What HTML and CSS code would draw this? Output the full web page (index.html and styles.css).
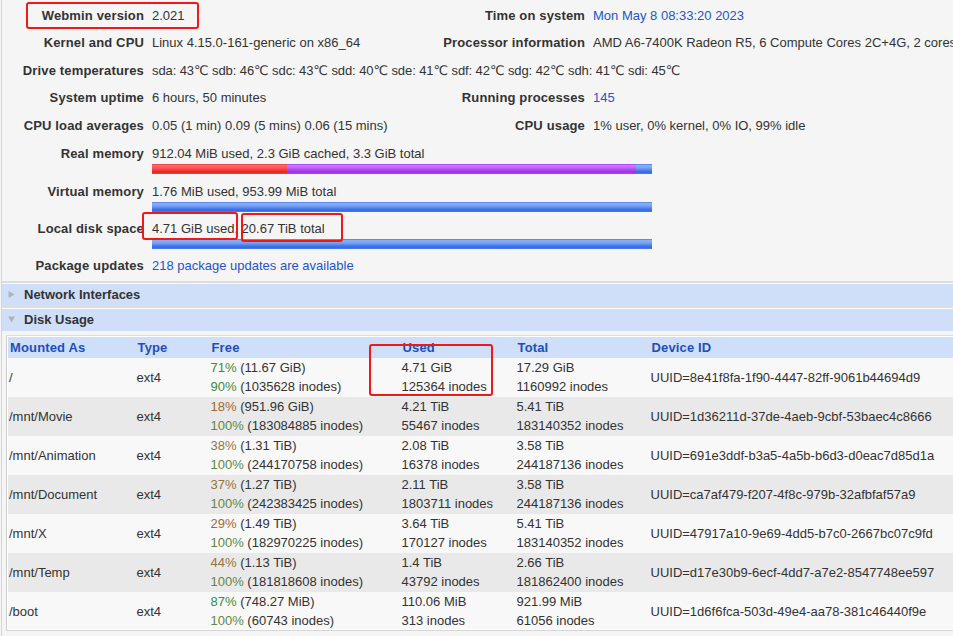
FILE: index.html
```html
<!DOCTYPE html>
<html>
<head>
<meta charset="utf-8">
<title>System Information</title>
<link rel="stylesheet" href="styles.css">
</head>
<body>
<div class="screen">
  <div class="page">
    <div class="sysinfo">
      <div class="info-row">
        <div class="label">Webmin version</div><div class="value">2.021</div>
        <div class="label">Time on system</div><div class="value link">Mon May 8 08:33:20 2023</div>
      </div>
      <div class="info-row">
        <div class="label">Kernel and CPU</div><div class="value">Linux 4.15.0-161-generic on x86_64</div>
        <div class="label">Processor information</div><div class="value">AMD A6-7400K Radeon R5, 6 Compute Cores 2C+4G, 2 cores</div>
      </div>
      <div class="info-row">
        <div class="label">Drive temperatures</div><div class="value wide temps">sda: 43℃ sdb: 46℃ sdc: 43℃ sdd: 40℃ sde: 41℃ sdf: 42℃ sdg: 42℃ sdh: 41℃ sdi: 45℃</div>
      </div>
      <div class="info-row">
        <div class="label">System uptime</div><div class="value">6 hours, 50 minutes</div>
        <div class="label">Running processes</div><div class="value link">145</div>
      </div>
      <div class="info-row">
        <div class="label">CPU load averages</div><div class="value">0.05 (1 min) 0.09 (5 mins) 0.06 (15 mins)</div>
        <div class="label">CPU usage</div><div class="value">1% user, 0% kernel, 0% IO, 99% idle</div>
      </div>
      <div class="info-row meter">
        <div class="label">Real memory</div>
        <div class="value wide">
          <div>912.04 MiB used, 2.3 GiB cached, 3.3 GiB total</div>
          <div class="bar bar-first"><span class="seg red" style="width:27%"></span><span class="seg purple" style="width:69.8%"></span><span class="seg blue" style="width:3.2%"></span></div>
        </div>
      </div>
      <div class="info-row meter">
        <div class="label">Virtual memory</div>
        <div class="value wide">
          <div>1.76 MiB used, 953.99 MiB total</div>
          <div class="bar"><span class="seg blue" style="width:100%"></span></div>
        </div>
      </div>
      <div class="info-row meter">
        <div class="label">Local disk space</div>
        <div class="value wide">
          <div>4.71 GiB used, 20.67 TiB total</div>
          <div class="bar"><span class="seg blue" style="width:100%"></span></div>
        </div>
      </div>
      <div class="info-row">
        <div class="label">Package updates</div><div class="value wide link">218 package updates are available</div>
      </div>
    </div>

    <div class="panel panel-first">
      <div class="panel-head">
        <svg class="arrow" width="7" height="7" viewBox="0 0 7 7"><polygon points="0.5,0 6.5,3.5 0.5,7" fill="#b3b3b3"/></svg>
        <span>Network Interfaces</span>
      </div>
    </div>

    <div class="panel">
      <div class="panel-head">
        <svg class="arrow" width="7" height="7" viewBox="0 0 7 7"><polygon points="0,0.5 7,0.5 3.5,6.5" fill="#b3b3b3"/></svg>
        <span>Disk Usage</span>
      </div>
      <div class="table-wrap">
        <table class="disks">
          <colgroup>
            <col class="c-mount"><col class="c-type"><col class="c-free"><col class="c-used"><col class="c-total"><col class="c-dev">
          </colgroup>
          <thead>
            <tr><th>Mounted As</th><th>Type</th><th>Free</th><th>Used</th><th>Total</th><th>Device ID</th></tr>
          </thead>
          <tbody>
            <tr class="odd">
              <td>/</td><td>ext4</td>
              <td><div><span class="p-good">71%</span> (11.67 GiB)</div><div><span class="p-good">90%</span> (1035628 inodes)</div></td>
              <td><div>4.71 GiB</div><div>125364 inodes</div></td>
              <td><div>17.29 GiB</div><div>1160992 inodes</div></td>
              <td>UUID=8e41f8fa-1f90-4447-82ff-9061b44694d9</td>
            </tr>
            <tr class="even">
              <td>/mnt/Movie</td><td>ext4</td>
              <td><div><span class="p-low">18%</span> (951.96 GiB)</div><div><span class="p-full">100%</span> (183084885 inodes)</div></td>
              <td><div>4.21 TiB</div><div>55467 inodes</div></td>
              <td><div>5.41 TiB</div><div>183140352 inodes</div></td>
              <td>UUID=1d36211d-37de-4aeb-9cbf-53baec4c8666</td>
            </tr>
            <tr class="odd">
              <td>/mnt/Animation</td><td>ext4</td>
              <td><div><span class="p-mid">38%</span> (1.31 TiB)</div><div><span class="p-full">100%</span> (244170758 inodes)</div></td>
              <td><div>2.08 TiB</div><div>16378 inodes</div></td>
              <td><div>3.58 TiB</div><div>244187136 inodes</div></td>
              <td>UUID=691e3ddf-b3a5-4a5b-b6d3-d0eac7d85d1a</td>
            </tr>
            <tr class="even">
              <td>/mnt/Document</td><td>ext4</td>
              <td><div><span class="p-mid">37%</span> (1.27 TiB)</div><div><span class="p-full">100%</span> (242383425 inodes)</div></td>
              <td><div>2.11 TiB</div><div>1803711 inodes</div></td>
              <td><div>3.58 TiB</div><div>244187136 inodes</div></td>
              <td>UUID=ca7af479-f207-4f8c-979b-32afbfaf57a9</td>
            </tr>
            <tr class="odd">
              <td>/mnt/X</td><td>ext4</td>
              <td><div><span class="p-low">29%</span> (1.49 TiB)</div><div><span class="p-full">100%</span> (182970225 inodes)</div></td>
              <td><div>3.64 TiB</div><div>170127 inodes</div></td>
              <td><div>5.41 TiB</div><div>183140352 inodes</div></td>
              <td>UUID=47917a10-9e69-4dd5-b7c0-2667bc07c9fd</td>
            </tr>
            <tr class="even">
              <td>/mnt/Temp</td><td>ext4</td>
              <td><div><span class="p-mid">44%</span> (1.13 TiB)</div><div><span class="p-full">100%</span> (181818608 inodes)</div></td>
              <td><div>1.4 TiB</div><div>43792 inodes</div></td>
              <td><div>2.66 TiB</div><div>181862400 inodes</div></td>
              <td>UUID=d17e30b9-6ecf-4dd7-a7e2-8547748ee597</td>
            </tr>
            <tr class="odd">
              <td>/boot</td><td>ext4</td>
              <td><div><span class="p-good">87%</span> (748.27 MiB)</div><div><span class="p-full">100%</span> (60743 inodes)</div></td>
              <td><div>110.06 MiB</div><div>313 inodes</div></td>
              <td><div>921.99 MiB</div><div>61056 inodes</div></td>
              <td>UUID=1d6f6fca-503d-49e4-aa78-381c46440f9e</td>
            </tr>
          </tbody>
        </table>
      </div>
    </div>
  </div>

  <div class="mark mark-version"></div>
  <div class="mark mark-disk-used"></div>
  <div class="mark mark-disk-total"></div>
  <div class="mark mark-used-col"></div>
</div>
</body>
</html>
```

FILE: styles.css
```css
* {
  box-sizing: border-box;
}

html, body {
  margin: 0;
  padding: 0;
  overflow: hidden;
}

body {
  width: 953px;
  height: 636px;
  background: #f5f5f5;
  font-family: "Liberation Sans", Arial, "DejaVu Sans", sans-serif;
  font-size: 13px;
  color: #333;
}

.screen {
  position: relative;
  width: 953px;
  height: 636px;
  overflow: hidden;
}

.page {
  margin-left: 1px;
  border-left: 1px solid #d6d6d6;
  height: 636px;
  padding-top: 2px;
}

/* ---------- system information ---------- */

.info-row {
  display: grid;
  grid-template-columns: 142px 240px 185px auto;
  column-gap: 8px;
  height: 27.5px;
  align-items: center;
  line-height: 16px;
  white-space: nowrap;
}

.label {
  text-align: right;
  font-weight: bold;
  color: #333;
  letter-spacing: 0.15px;
}

.value {
  color: #333;
}

.wide {
  grid-column: 2 / -1;
}

.temps {
  letter-spacing: -0.09px;
}

.link {
  color: #2456c4;
}

.info-row.meter {
  height: 37.67px;
  align-items: start;
  padding-top: 6.5px;
}

.bar {
  display: flex;
  width: 500px;
  height: 10px;
  margin-top: 2px;
}

.bar-first {
  height: 9.5px;
}

.seg {
  display: block;
  height: 100%;
}

.seg.red {
  background: linear-gradient(to bottom, #e63636 0%, #ff6b6b 14%, #fb4f4f 45%, #e92222 80%, #f24242 100%);
}

.seg.purple {
  background: linear-gradient(to bottom, #a536e6 0%, #cd7dff 14%, #bb58f6 45%, #a02ee8 80%, #b143f1 100%);
}

.seg.blue {
  background: linear-gradient(to bottom, #4677e6 0%, #88aff5 14%, #78a2f2 40%, #5587ee 58%, #3367e6 82%, #4d7fee 100%);
}

/* ---------- panels ---------- */

.panel {
  border-top: 2px solid #dddddd;
  padding-top: 1px;
  background: #fafafa;
}

.panel-first {
  margin-top: 1px;
}

.panel-head {
  display: flex;
  align-items: center;
  gap: 9px;
  height: 22px;
  padding-left: 6px;
  background: #cfdffa;
  font-weight: bold;
  color: #333;
}

.arrow {
  display: block;
  flex: none;
}

.table-wrap {
  background: #f5f5f5;
  padding: 4px 0 0 4px;
}

.disks {
  border-collapse: collapse;
  border-spacing: 0;
  table-layout: fixed;
  width: 1000px;
  border-top: 2px solid #dddddd;
  border-left: 1px solid #cfcfcf;
  border-bottom: 1px solid #d6d6d6;
  background: #fff;
  outline: 1px solid #fff;
  outline-offset: -2px;
}

.c-mount { width: 128px; }
.c-type { width: 74px; }
.c-free { width: 191px; }
.c-used { width: 115px; }
.c-total { width: 134px; }
.c-dev { width: 358px; }

.disks thead tr {
  height: 22px;
}

.disks th {
  background: #cfdffa;
  color: #1d4fb8;
  font-weight: bold;
  text-align: left;
  padding: 0 0 0 3px;
  border-top: 1px solid #fff;
  white-space: nowrap;
  letter-spacing: 0.15px;
}

.disks tbody tr {
  height: 39px;
}

.disks td {
  padding: 0 0 0 2px;
  line-height: 19px;
  vertical-align: middle;
  white-space: nowrap;
  color: #333;
}

.disks tr.odd td {
  background: #f8f8f9;
}

.disks tr.even td {
  background: #e9e9e9;
}

.p-good { color: #3f8a3a; }
.p-full { color: #64883a; }
.p-mid { color: #95743a; }
.p-low { color: #a2692e; }

/* ---------- red annotation boxes ---------- */

.mark {
  position: absolute;
  border: 2px solid #f01818;
  border-radius: 3px;
}

.mark-version {
  left: 26px;
  top: 2px;
  width: 173px;
  height: 27px;
}

.mark-disk-used {
  left: 142px;
  top: 212px;
  width: 96px;
  height: 28px;
}

.mark-disk-total {
  left: 241px;
  top: 213px;
  width: 102px;
  height: 29px;
}

.mark-used-col {
  left: 369px;
  top: 344px;
  width: 124px;
  height: 52px;
}
```
